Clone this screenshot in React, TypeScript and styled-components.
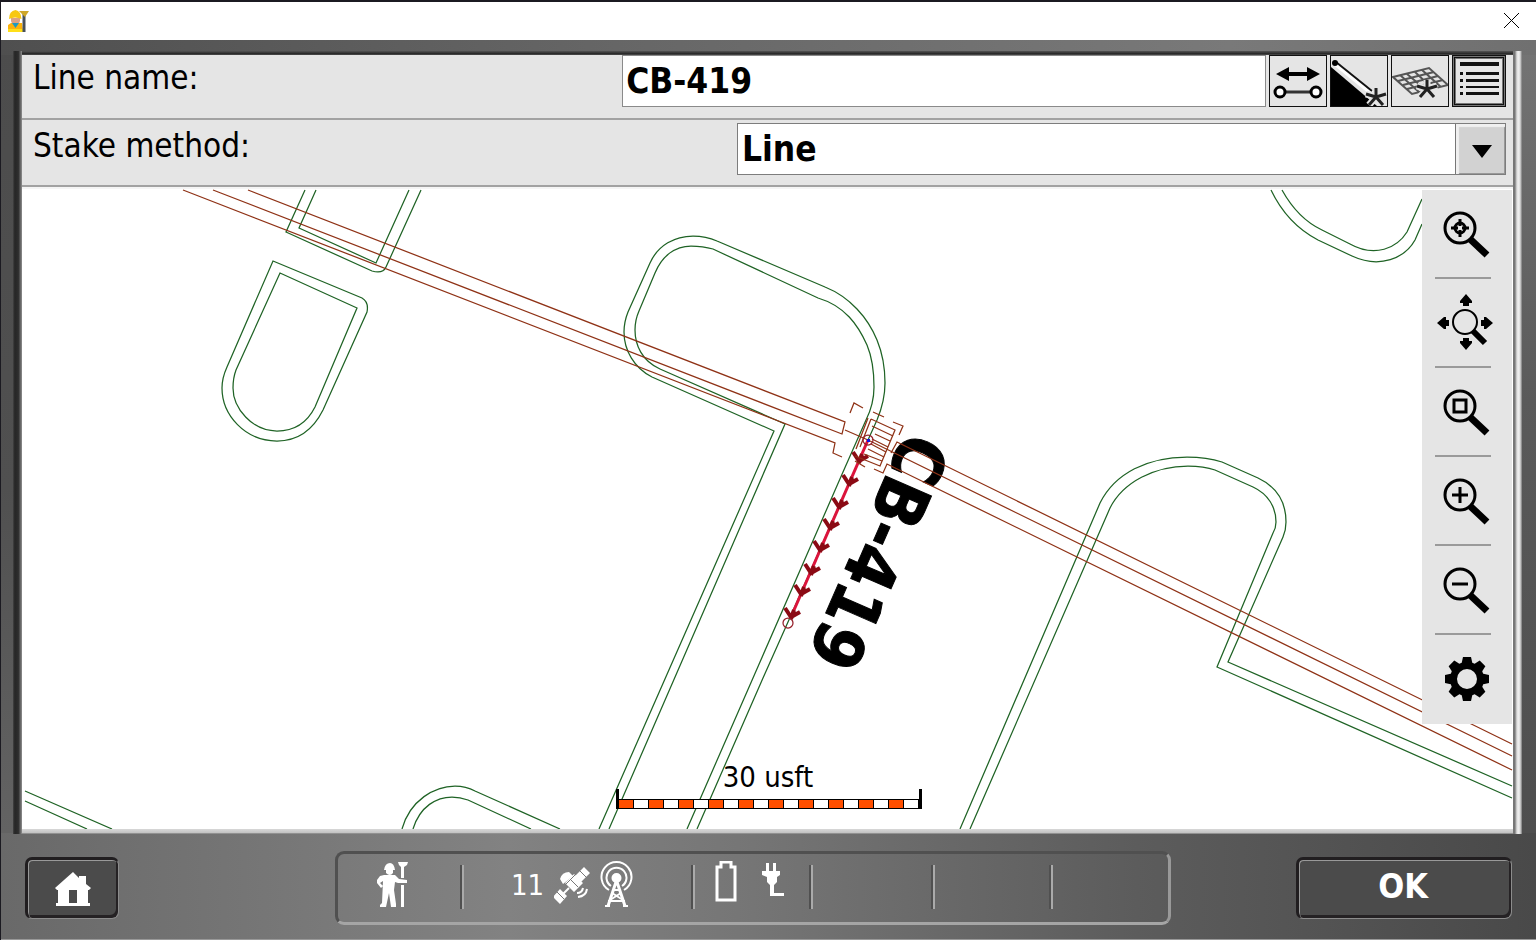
import React from "react";
import styled, { createGlobalStyle } from "styled-components";

const GlobalStyle = createGlobalStyle`
  *, *::before, *::after { box-sizing: border-box; }
  body {
    margin: 0;
    background: #15151c;
    font-family: "DejaVu Sans Condensed", "DejaVu Sans", Tahoma, sans-serif;
    color: #000;
  }
  button, input, select { font-family: inherit; margin: 0; }
`;

const Window = styled.div`
  display: flex;
  flex-direction: column;
  height: 100vh;
  min-height: 600px;
  padding: 2px 0 0 1px;
  background: #1b1a21;
`;

const TitleBar = styled.header`
  display: flex;
  align-items: center;
  justify-content: space-between;
  flex: none;
  height: 38px;
  padding: 0 16px 1px 6px;
  background: #fff;
`;

const CloseButton = styled.button`
  display: flex;
  padding: 0;
  border: 0;
  background: none;
`;

const Frame = styled.main`
  display: flex;
  flex-direction: column;
  flex: 1;
  min-height: 0;
  background:
    linear-gradient(to right, #4f4f4f, #666 40%, #797979 80%, #707070) top / 100% 15px no-repeat,
    linear-gradient(to right, #696969, #828282 33%, #767676 48%, #5c5c5c 74%, #494949) bottom / 100% 106px no-repeat,
    linear-gradient(#4c4c4c, #505050 50%, #696969) left / 50% 100% no-repeat,
    linear-gradient(#747474, #5a5a5a 40%, #4b4b4b) right / 50% 100% no-repeat;
  border-bottom: 1px solid #999;
`;

const Bezel = styled.div`
  display: flex;
  flex: 1;
  min-height: 0;
  margin: 11px 14px 0 12px;
  padding: 4px 9px 5px 9px;
  background:
    linear-gradient(to right, #444, #262626 20%, #2e2e2e 60%, #909090) left / 9px 100% no-repeat,
    linear-gradient(to right, #777 0, #777 2px, #bbb 3px, #f2f2f2 5px, #ddd 7px, #777) right / 9px 100% no-repeat,
    linear-gradient(#555, #262626 70%, #555) top / 100% 4px no-repeat,
    linear-gradient(#d8d8d8, #c4c4c4 70%, #777) bottom / 100% 5px no-repeat;
`;

const Screen = styled.div`
  display: flex;
  flex-direction: column;
  flex: 1;
  min-width: 0;
  background: #fff;
`;

const FieldRow = styled.div<{ $height: number; $top?: number }>`
  display: flex;
  align-items: flex-start;
  flex: none;
  height: ${(p) => p.$height}px;
  padding: ${(p) => p.$top ?? 0}px 7px 0 11px;
  background: #e5e5e5;
  border-bottom: 2px solid #a2a2a2;
  box-shadow: 0 2px 0 #f5f5f5;
`;

const FieldLabel = styled.label<{ $width: string }>`
  flex: none;
  width: ${(p) => p.$width};
  font-size: 33px;
  line-height: 46px;
  white-space: nowrap;
`;

const NameInput = styled.input`
  flex: 1;
  min-width: 0;
  height: 52px;
  padding: 0 3px;
  border: 1px solid #8a8a8a;
  border-radius: 0;
  background: #fff;
  font-size: 35px;
  font-weight: 700;
  outline: 0;
`;

const ToolGroup = styled.div`
  display: flex;
  gap: 3px;
  margin-left: 3px;
`;

const ToolButton = styled.button<{ $active?: boolean }>`
  display: flex;
  align-items: center;
  justify-content: center;
  width: ${(p) => (p.$active ? 54 : 58)}px;
  height: 52px;
  padding: 0;
  border: 1px solid #111;
  background: #e5e5e5;
  box-shadow: ${(p) =>
    p.$active ? "inset 0 0 0 1px #777, inset 0 0 0 2px #111, inset 0 0 0 3px #777" : "none"};
`;

const SelectWrap = styled.div`
  position: relative;
  flex: 1;
  height: 52px;
`;

const MethodSelect = styled.select`
  appearance: none;
  width: 100%;
  height: 100%;
  padding: 0 60px 0 4px;
  border: 1px solid #7d7d7d;
  border-radius: 0;
  background: #fff;
  color: #000;
  font-size: 35px;
  font-weight: 700;
  outline: 0;
`;

const SelectArrow = styled.span`
  position: absolute;
  inset: 1px 1px 1px auto;
  display: flex;
  align-items: center;
  justify-content: center;
  width: 50px;
  padding: 4px 0 0 2px;
  border-left: 1px solid #777;
  background: #d2d2d2;
  box-shadow: inset 3px 3px 1px #f0f0f0, inset -1px -1px 0 #999;
  pointer-events: none;
`;

const MapArea = styled.section`
  position: relative;
  flex: 1;
  min-height: 0;
  overflow: hidden;
`;

const MapSvg = styled.svg`
  display: block;
  width: 100%;
  height: 100%;
`;

const MapTools = styled.nav`
  position: absolute;
  top: 3px;
  right: 1px;
  display: flex;
  flex-direction: column;
  width: 90px;
  background: #e5e5e5;
`;

const MapToolButton = styled.button`
  display: flex;
  justify-content: center;
  align-items: center;
  height: 89px;
  padding: 0;
  border: 0;
  background: none;

  &:not(:last-child) {
    background: linear-gradient(#9a9a9a, #9a9a9a) 13px 100% / 56px 2px no-repeat;
  }
`;

const Footer = styled.footer`
  display: flex;
  align-items: flex-start;
  flex: none;
  height: 105px;
  padding: 17px 24px 0 24px;
`;

const FrameButton = styled.button<{ $width: number }>`
  display: flex;
  align-items: center;
  justify-content: center;
  flex: none;
  width: ${(p) => p.$width}px;
  height: 62px;
  margin-top: 6px;
  padding: 0;
  border: 3px solid #211e20;
  border-right-color: #8c8c8c;
  border-bottom-color: #8c8c8c;
  border-width: 3px 1px 1px 3px;
  border-radius: 7px;
  background: #4b4b4b;
  box-shadow: inset 1px 1px 0 #999, inset -2px -3px 0 #252224;
  color: #fff;
`;

const ConfirmButton = styled(FrameButton)`
  padding: 0 4px 6px 0;
  font-size: 34px;
  font-weight: 700;
`;

const StatusPanel = styled.div`
  display: grid;
  grid-template-columns: 126fr 231fr 118fr 122fr 118fr 115fr;
  flex: 1;
  height: 74px;
  margin: 0 125px 0 216px;
  padding-top: 11px;
  border: 3px solid #505050;
  border-right-color: #999;
  border-bottom-color: #a5a5a5;
  border-radius: 9px;
`;

const StatusCell = styled.div<{ $pad?: number; $gap?: number }>`
  display: flex;
  align-items: center;
  gap: ${(p) => p.$gap ?? 0}px;
  height: 44px;
  padding: 0 0 5px ${(p) => p.$pad ?? 0}px;
  color: #fff;
  font-size: 29px;

  &:not(:last-child) {
    border-right: 2px solid #aaa;
    box-shadow: inset -2px 0 0 #505050;
  }
`;

const GREEN = "#1f6325";
const BROWN = "#8f3216";

const greenPaths = [
  "M305 190L286 232L372 271Q383 274 386 267L421 190",
  "M316 190L299 228L376 263L409 190",
  "M273 261L362 298Q369 302 367 312L323 410C312 432 295 441 277 441C245 441 222 415 222 388Q222 378 227 367Z",
  "M280 273L357 308L315 407C307 423 295 431 277 431C252 431 233 408 233 388Q233 378 236 370Z",
  "M599 829L774 431L652 377C634 368 624 350 624 332Q624 322 628 312L650 263C658 245 675 236 693 236Q706 236 717 241L825 287C850 297 868 318 877 340C884 357 885 372 885 383C885 395 882 408 877 420L868 440L788 622L763 678L697 829",
  "M609 829L785 424L660 369C642 361 635 345 635 330Q635 320 639 311L655 273C662 256 675 246 691 246Q703 246 713 249L818 298C845 306 858 325 867 345C872 357 874 370 874 387C874 398 871 410 866 420L843 472L760 662L687 829",
  "M960 829L1100 503C1115 473 1148 457 1187 457Q1207 457 1222 462L1258 478C1277 487 1286 503 1286 522Q1286 530 1283 537L1228 662L1512 786",
  "M970 829L1110 508C1123 482 1155 466 1188 466Q1204 466 1215 470L1253 487C1268 494 1276 507 1276 522Q1276 528 1273 533L1217 667L1512 798",
  "M1271 190C1282 213 1297 229 1318 240L1352 256C1380 269 1405 258 1415 240L1422 224",
  "M1282 190C1292 208 1305 222 1322 230L1350 244C1375 258 1397 248 1407 232L1422 199",
  "M25 791L112 829M25 801L87 829",
  "M402 829C410 800 435 786 455 786Q466 786 475 791L560 829",
  "M413 829C420 806 437 797 452 797Q460 797 468 800L531 829",
];

const brownPaths = [
  "M248 190L845 422L842 434L213 190",
  "M183 190L835 443L833 453L842 457",
  "M845 430L868 440L1512 756",
  "M1512 744L897 442L891 453",
  "M1512 770L887 464L883 473L874 469",
  "M850 413L854 403L863 408M873 412L884 417M893 422L903 426L899 435",
  "M868 418L856 449M871 419L860 447M871 419L895 430L880 466L855 456",
  "M872 426L893 436M875 434L890 441M872 439L888 447M871 444L886 452M868 449L884 457M864 454L882 461",
  "M855 461L865 467",
];

const arrowTips = [
  [860, 461], [850, 484], [840, 507], [831, 528],
  [821, 550], [812, 573], [802, 594], [792, 617],
];

const SiteMap = () => (
  <MapSvg viewBox="22 187 1491 642" preserveAspectRatio="xMidYMid slice" role="img" aria-label="Site map">
    <g fill="none" stroke={GREEN} strokeWidth="1.250">
      {greenPaths.map((d) => <path key={d} d={d} />)}
    </g>
    <path d="M868 440L791 617" stroke="#dc143c" strokeWidth="3" />
    <g fill="none" stroke="#8b0a14" strokeWidth="4">
      {arrowTips.map(([x, y]) => (
        <path key={y} d={`M${x - 7} ${y - 9}L${x - 1} ${y}L${x + 8} ${y - 5}M${x - 1} ${y + 2}L${x + 2} ${y - 7}`} />
      ))}
    </g>
    <text transform="translate(906 429) rotate(113.6)" fontSize="69" fontWeight="700" stroke="#000">CB-419</text>
    <g fill="none" stroke={BROWN} strokeWidth="1.250">
      {brownPaths.map((d) => <path key={d} d={d} />)}
    </g>
    <g fill="none" stroke="#96202a" strokeWidth="1.250">
      <circle cx="868" cy="440" r="5" />
      <circle cx="788" cy="623" r="5" />
    </g>
    <rect x="867" y="439" width="3" height="3" fill="#1010e0" />
    <text x="768" y="787" fontSize="29" textAnchor="middle">30 usft</text>
    <g shapeRendering="crispEdges">
      <rect x="618" y="799" width="302" height="10" fill="#000" />
      {Array.from({ length: 20 }, (_, i) => (
        <rect key={i} x={619 + i * 15} y="800" width="14" height="8" fill={i % 2 ? "#fff" : "#ff4f00"} />
      ))}
      <rect x="616" y="789" width="3" height="20" />
      <rect x="919" y="789" width="3" height="20" />
    </g>
  </MapSvg>
);

const Magnifier = ({ children }: { children: React.ReactNode }) => (
  <svg width="64" height="64" viewBox="0 1 64 64" fill="none" stroke="#000">
    <circle cx="25" cy="26" r="15" strokeWidth="3" />
    <path d="M35 37L52 53" strokeWidth="7" />
    {children}
  </svg>
);

const gearTeeth = [0, 45, 90, 135, 180, 225, 270, 315];

const Asterisk = ({ x, y }: { x: number; y: number }) => (
  <g transform={`translate(${x} ${y})`} fill="none">
    {["#e5e5e5", "#222"].map((c, i) => (
      <path key={c} d="M0 0V-9M0 0L10 -3M0 0L7 8M0 0L-7 8M0 0L-10 -3" stroke={c} strokeWidth={i ? 3 : 7} />
    ))}
  </g>
);

export default function App() {
  return (
    <>
      <GlobalStyle />
      <Window>
        <TitleBar>
          <svg width="23" height="24" viewBox="0 0 23 24">
            <path d="M1 23V16L4 14H15L16 23Z" fill="#fbb20c" />
            <path d="M4 9H13V12Q12 16 8.500 16Q5 16 4 12Z" fill="#dca184" />
            <path d="M5 14L8.500 19L12 14Z" fill="#1c9ac0" />
            <path d="M2 10Q2 2 8.500 1Q14 2 14.500 10Q8 7 2 10Z" fill="#f8c810" />
            <path d="M1 20H16V23H1Z" fill="#ffdf19" />
            <path d="M17 4V23" stroke="#48515a" strokeWidth="3" />
            <path d="M12 2H22L18 8Z" fill="#cfa728" />
          </svg>
          <CloseButton aria-label="Close">
            <svg width="17" height="17" viewBox="0 0 17 17" stroke="#000" strokeWidth="1">
              <path d="M1 1L16 16M16 1L1 16" />
            </svg>
          </CloseButton>
        </TitleBar>
        <Frame>
          <Bezel>
            <Screen>
              <FieldRow $height={65}>
                <FieldLabel $width="40%" htmlFor="line-name">Line name:</FieldLabel>
                <NameInput id="line-name" defaultValue="CB-419" />
                <ToolGroup>
                  <ToolButton aria-label="Reverse line direction">
                    <svg width="56" height="50" viewBox="1270 56 56 50" fill="none" stroke="#000">
                      <path d="M1285 74H1311" strokeWidth="4" />
                      <path d="M1276 74L1289 67V81ZM1320 74L1307 67V81Z" fill="#000" stroke="none" />
                      <path d="M1286 92H1310" strokeWidth="3" stroke="#333" />
                      <circle cx="1280" cy="92" r="5" strokeWidth="3" fill="#fff" />
                      <circle cx="1316" cy="92" r="5" strokeWidth="3" fill="#fff" />
                    </svg>
                  </ToolButton>
                  <ToolButton aria-label="New slope">
                    <svg width="56" height="50" viewBox="1331 56 56 50">
                      <path d="M1331 67L1377 106H1331Z" />
                      <path d="M1335 63L1372 93" stroke="#fff" strokeWidth="5" />
                      <path d="M1336 62L1372 91" stroke="#111" strokeWidth="2" />
                      <circle cx="1335" cy="63" r="3" />
                      <Asterisk x={1376} y={97} />
                    </svg>
                  </ToolButton>
                  <ToolButton aria-label="New surface">
                    <svg width="56" height="50" viewBox="1393 56 56 50">
                      <path
                        d="M1394 77L1430 68L1449 85L1413 94ZM1399 81L1435 72M1404 85L1439 76M1408 89L1444 80M1401 75L1420 92M1408 74L1427 90M1416 72L1434 89M1423 70L1442 87"
                        fill="none" stroke="#555" strokeWidth="2"
                      />
                      <Asterisk x={1428} y={89} />
                    </svg>
                  </ToolButton>
                  <ToolButton $active aria-label="List">
                    <svg width="44" height="40" viewBox="0 0 44 40" shapeRendering="crispEdges">
                      <path d="M3 1H42V5H3ZM3 11H6V14H3ZM9 11H42V14H9ZM3 18H6V21H3ZM9 18H42V21H9ZM3 25H6V27H3ZM9 25H42V27H9ZM3 31H6V34H3ZM9 31H42V34H9Z" fill="#111" />
                    </svg>
                  </ToolButton>
                </ToolGroup>
              </FieldRow>
              <FieldRow $height={67} $top={3}>
                <FieldLabel $width="704px" htmlFor="stake-method">Stake method:</FieldLabel>
                <SelectWrap>
                  <MethodSelect id="stake-method" defaultValue="Line">
                    <option>Line</option>
                  </MethodSelect>
                  <SelectArrow>
                    <svg width="20" height="13" viewBox="0 0 20 13"><path d="M0 0H20L10 13Z" /></svg>
                  </SelectArrow>
                </SelectWrap>
              </FieldRow>
              <MapArea>
                <SiteMap />
                <MapTools aria-label="Map tools">
                  <MapToolButton aria-label="Zoom to point">
                    <Magnifier>
                      <circle cx="25" cy="26" r="5" strokeWidth="3" />
                      <path d="M25 17V24M25 28V35M16 26H23M27 26H34" strokeWidth="3" />
                    </Magnifier>
                  </MapToolButton>
                  <MapToolButton aria-label="Zoom extents">
                    <svg width="64" height="64" viewBox="1435 292 64 64" fill="none" stroke="#000">
                      <circle cx="1465" cy="322" r="12" strokeWidth="2" />
                      <path d="M1473 331L1485 343" strokeWidth="6" />
                      <path
                        d="M1466 294L1472 301V303H1469V306H1463V303H1460V301ZM1466 350L1472 343V341H1469V338H1463V341H1460V343ZM1437 323L1444 317H1446V320H1449V326H1446V329H1444ZM1493 323L1486 317H1484V320H1481V326H1484V329H1486Z"
                        fill="#000" stroke="none"
                      />
                    </svg>
                  </MapToolButton>
                  <MapToolButton aria-label="Zoom window">
                    <Magnifier><path d="M19 20H31V32H19Z" strokeWidth="3" /></Magnifier>
                  </MapToolButton>
                  <MapToolButton aria-label="Zoom in">
                    <Magnifier><path d="M25 18V34M17 26H33" strokeWidth="3" /></Magnifier>
                  </MapToolButton>
                  <MapToolButton aria-label="Zoom out">
                    <Magnifier><path d="M17 26H33" strokeWidth="3" /></Magnifier>
                  </MapToolButton>
                  <MapToolButton aria-label="Map settings">
                    <svg width="64" height="64" viewBox="-32 -31 64 64">
                      {gearTeeth.map((a) => (
                        <path key={a} d="M-6 -13L-4 -22H4L6 -13Z" transform={`rotate(${a})`} />
                      ))}
                      <circle r="13.500" fill="none" stroke="#000" strokeWidth="7" />
                    </svg>
                  </MapToolButton>
                </MapTools>
              </MapArea>
            </Screen>
          </Bezel>
          <Footer>
            <FrameButton $width={94} aria-label="Home">
              <svg width="36" height="35" viewBox="0 0 36 35" fill="#fff">
                <path d="M0 16L18 0L24 6V4H31V12L36 16L34 18H33V31H35V34H1V31H3V18H2ZM14 18V31H22V18Z" fillRule="evenodd" />
              </svg>
            </FrameButton>
            <StatusPanel>
              <StatusCell $pad={38}>
                <svg width="34" height="48" viewBox="376 861 34 48" fill="#fff">
                  <path d="M384 870Q385 863 390 863Q394 863 395 870ZM386 870H393V873Q390 877 386 873Z" />
                  <path d="M384 875H395L399 879L407 880V883H398L395 882L394 890L396 904V907H391L389 893L386 907H380V905L382 903L383 881L380 883L383 886L381 888L377 883V880L380 876Z" />
                  <path d="M398 862H408L407 865L404 867V878H401V867L399 865ZM401 885H404V907H401Z" />
                </svg>
              </StatusCell>
              <StatusCell $pad={47} $gap={10}>
                <span>11</span>
                <svg width="36" height="40" viewBox="553 865 36 40" fill="#fff">
                  <path d="M583 867L589 873L580 882L574 876ZM559 889L566 896L559 904L552 897ZM564 883L573 874L582 883L573 892Z" />
                  <path d="M559 879Q561 872 568 872L572 876L562 884Z" />
                  <path d="M576 893Q581 893 582 888M577 897Q585 896 586 889M574 884L580 878M560 896L568 888" fill="none" stroke="#fff" strokeWidth="2" />
                  <path d="M570 880L577 887M578 870L586 878M556 892L563 899M564 885L575 874" stroke="#777" strokeWidth="1" />
                </svg>
                <svg width="34" height="48" viewBox="601 861 34 48" fill="none" stroke="#fff" strokeWidth="2">
                  <path d="M610 890A15 15 0 1 1 625 890M612 886A10 10 0 1 1 623 886" />
                  <circle cx="617.500" cy="878" r="4" fill="#fff" />
                  <path d="M617 882L609 906M618 882L626 906" strokeWidth="3" />
                  <path d="M614 890H621M611 900L622 893M624 900L613 893M609 901H626M606 906H611M624 906H629" />
                </svg>
              </StatusCell>
              <StatusCell $pad={20} $gap={23}>
                <svg width="23" height="48" viewBox="713 861 23 48" fill="none" stroke="#fff" strokeWidth="3">
                  <path d="M715 867H719V862H729V867H733V900H715Z" />
                </svg>
                <svg width="25" height="48" viewBox="759 861 25 48" fill="#fff">
                  <path d="M764 863H767V871H771V863H774V871H778V875L775 877V882L772 885V893H782V896H768V885L765 882V877L760 875V871H764Z" />
                </svg>
              </StatusCell>
              <StatusCell />
              <StatusCell />
              <StatusCell />
            </StatusPanel>
            <ConfirmButton $width={216}>OK</ConfirmButton>
          </Footer>
        </Frame>
      </Window>
    </>
  );
}
